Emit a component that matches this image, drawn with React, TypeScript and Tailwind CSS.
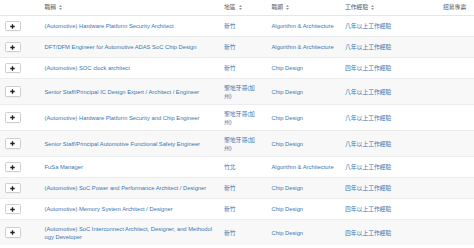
import React from "react";

type Row = { title: string; loc: string; cat: string; exp: string };

const rows: Row[] = [
  { title: "(Automotive) Hardware Platform Security Architect", loc: "新竹", cat: "Algorithm & Architecture", exp: "八年以上工作經驗" },
  { title: "DFT/DFM Engineer for Automotive ADAS SoC Chip Design", loc: "新竹", cat: "Algorithm & Architecture", exp: "八年以上工作經驗" },
  { title: "(Automotive) SOC clock architect", loc: "新竹", cat: "Chip Design", exp: "四年以上工作經驗" },
  { title: "Senior Staff/Principal IC Design Expert / Architect / Engineer", loc: "聖地牙哥(加州)", cat: "Chip Design", exp: "八年以上工作經驗" },
  { title: "(Automotive) Hardware Platform Security and Chip Engineer", loc: "聖地牙哥(加州)", cat: "Chip Design", exp: "八年以上工作經驗" },
  { title: "Senior Staff/Principal Automotive Functional Safety Engineer", loc: "聖地牙哥(加州)", cat: "Chip Design", exp: "八年以上工作經驗" },
  { title: "FuSa Manager", loc: "竹北", cat: "Algorithm & Architecture", exp: "八年以上工作經驗" },
  { title: "(Automotive) SoC Power and Performance Architect / Designer", loc: "新竹", cat: "Chip Design", exp: "四年以上工作經驗" },
  { title: "(Automotive) Memory System Architect / Designer", loc: "新竹", cat: "Chip Design", exp: "四年以上工作經驗" },
  { title: "(Automotive) SoC Interconnect Architect, Designer, and Methodology Developer", loc: "新竹", cat: "Chip Design", exp: "四年以上工作經驗" },
];

function SortIcon() {
  return (
    <svg width="3" height="5" viewBox="0 0 6 10" className="inline-block ml-[3px] align-middle">
      <path d="M3 0 L6 4 L0 4 Z" fill="#9a9a9a" />
      <path d="M3 10 L6 6 L0 6 Z" fill="#9a9a9a" />
    </svg>
  );
}

function PlusButton() {
  return (
    <div className="flex items-center justify-center w-[16px] h-[10.5px] bg-white border border-[#cfcfcf] rounded-[1.5px] shadow-[0_0.5px_0.5px_rgba(0,0,0,0.06)]">
      <svg width="5" height="5" viewBox="0 0 10 10">
        <path d="M5 0.5 V9.5 M0.5 5 H9.5" stroke="#222" strokeWidth="2.6" />
      </svg>
    </div>
  );
}

export default function App() {
  const th = "text-left font-normal text-[#555] pt-[3px] pb-[4px] px-[4.75px] align-middle border-b border-[#e6e6e6]";
  const td = "px-[4.75px] py-[4.5px] align-middle text-[#3a76b0]";
  return (
    <div className="w-[474px] h-[248px] overflow-hidden bg-white font-['Liberation_Sans','Noto_Sans_CJK_TC',sans-serif] text-[5.8px] leading-[8px]">
      <table className="table-fixed border-collapse w-[474px]">
        <colgroup>
          <col className="w-[39.75px]" />
          <col className="w-[179.5px]" />
          <col className="w-[47.5px]" />
          <col className="w-[73.5px]" />
          <col className="w-[98px]" />
          <col className="w-[35.75px]" />
        </colgroup>
        <thead>
          <tr>
            <th className={th}></th>
            <th className={th}>職稱<SortIcon /></th>
            <th className={th}>地區<SortIcon /></th>
            <th className={th}>職類<SortIcon /></th>
            <th className={th}>工作經驗<SortIcon /></th>
            <th className={th + " whitespace-nowrap"}>招募專案</th>
          </tr>
        </thead>
        <tbody>
          {rows.map((r, i) => (
            <tr key={i} className={(i % 2 === 1 ? "bg-[#f8f8f8] " : "bg-white ") + "border-t border-[#ececec]"}>
              <td className="px-[4.75px] py-[4.75px] align-middle">
                <PlusButton />
              </td>
              <td className={td + " break-all"}>{r.title}</td>
              <td className={td}>{r.loc}</td>
              <td className={td}>{r.cat}</td>
              <td className={td}>{r.exp}</td>
              <td className={td}></td>
            </tr>
          ))}
        </tbody>
      </table>
    </div>
  );
}
